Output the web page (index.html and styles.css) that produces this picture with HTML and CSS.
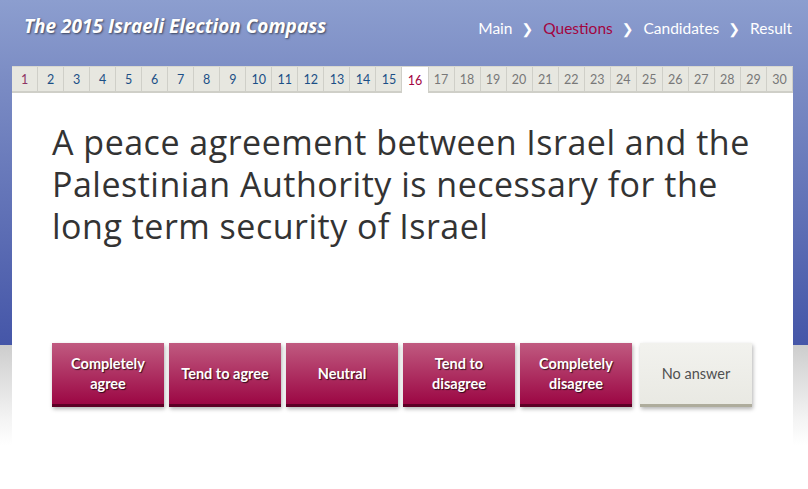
FILE: index.html
```html
<!DOCTYPE html>
<html>
<head>
<meta charset="utf-8">
<link rel="stylesheet" href="styles.css">
</head>
<body>
<header class="top">
  <div class="title">The 2015 Israeli Election Compass</div>
  <nav class="crumbs">
    <span class="crumb">Main</span><span class="sep">&#x276F;</span>
    <span class="crumb active">Questions</span><span class="sep">&#x276F;</span>
    <span class="crumb">Candidates</span><span class="sep">&#x276F;</span>
    <span class="crumb">Result</span>
  </nav>
</header>
<div class="wrap">
  <div class="tabs">
    <span class="tab visited">1</span>
    <span class="tab done">2</span>
    <span class="tab done">3</span>
    <span class="tab done">4</span>
    <span class="tab done">5</span>
    <span class="tab done">6</span>
    <span class="tab done">7</span>
    <span class="tab done">8</span>
    <span class="tab done">9</span>
    <span class="tab done">10</span>
    <span class="tab done">11</span>
    <span class="tab done">12</span>
    <span class="tab done">13</span>
    <span class="tab done">14</span>
    <span class="tab done">15</span>
    <span class="tab current">16</span>
    <span class="tab">17</span>
    <span class="tab">18</span>
    <span class="tab">19</span>
    <span class="tab">20</span>
    <span class="tab">21</span>
    <span class="tab">22</span>
    <span class="tab">23</span>
    <span class="tab">24</span>
    <span class="tab">25</span>
    <span class="tab">26</span>
    <span class="tab">27</span>
    <span class="tab">28</span>
    <span class="tab">29</span>
    <span class="tab">30</span>
  </div>
  <main class="panel">
    <h1 class="question">A peace agreement between Israel and the Palestinian Authority is necessary for the long term security of Israel</h1>
    <div class="answers">
      <button class="ans">Completely<br>agree</button>
      <button class="ans">Tend to agree</button>
      <button class="ans">Neutral</button>
      <button class="ans">Tend to<br>disagree</button>
      <button class="ans">Completely<br>disagree</button>
      <button class="ans none">No answer</button>
    </div>
  </main>
</div>
</body>
</html>
```
FILE: styles.css
```css
html {
  background: #fff;
}
body {
  margin: 0;
  height: 489px;
  overflow: hidden;
  font-family: Lato, "DejaVu Sans", sans-serif;
  background: linear-gradient(to bottom, #8c9ecf 0px, #7b8cc4 80px, #4556a8 345px, #cdcdcd 345px, #f4f4f4 420px, #ffffff 445px);
}
.top {
  height: 66px;
  display: flex;
  justify-content: space-between;
  align-items: flex-start;
  padding: 0 16px 0 24px;
  color: #fff;
}
.title {
  margin-top: 13px;
  font-family: "Open Sans", Lato, sans-serif;
  font-size: 19px;
  font-weight: bold;
  font-style: italic;
  text-shadow: 1px 1px 2px rgba(0, 0, 0, 0.55);
}
.crumbs {
  margin-top: 19px;
  font-size: 15.5px;
  display: flex;
  align-items: baseline;
}
.crumb {
  color: #fff;
}
.crumb.active {
  color: #a3053f;
}
.sep {
  font-family: "DejaVu Sans", sans-serif;
  font-weight: bold;
  font-size: 14px;
  margin: 0 10px 0 9px;
  color: #fff;
}
.wrap {
  margin-left: 12px;
  width: 781px;
}
.tabs {
  display: flex;
  height: 27px;
  background: #e7e7e0;
  border-top: 1px solid #d8d8d0;
  box-sizing: border-box;
  border-bottom: 2px solid #cfcfc8;
}
.tab {
  flex: 1;
  display: flex;
  align-items: center;
  justify-content: center;
  font-size: 12.5px;
  color: #787878;
  border-right: 1px solid #cfcfc8;
}
.tab.done {
  color: #1b4f86;
}
.tab.visited {
  color: #8e3464;
}
.tab.current {
  background: #fff;
  color: #a3053f;
  margin-bottom: -2px;
}
.panel {
  background: #fff;
  height: 396px;
  padding: 28px 40px 0;
  box-sizing: border-box;
}
.question {
  margin: 0;
  height: 222px;
  max-width: 701px;
  font-family: "Open Sans", Lato, sans-serif;
  font-size: 34px;
  letter-spacing: 0.5px;
  line-height: 42px;
  font-weight: normal;
  color: #333;
}
.answers {
  display: flex;
  gap: 5px;
}
.ans {
  width: 112px;
  height: 64px;
  box-sizing: border-box;
  border: 0;
  border-bottom: 3px solid #5c0025;
  padding: 0 4px;
  background: linear-gradient(to bottom, #c05a80, #9c0744);
  color: #fff;
  font-family: Lato, "DejaVu Sans", sans-serif;
  font-weight: bold;
  font-size: 14.5px;
  line-height: 20px;
  text-shadow: 1px 1px 1px rgba(0, 0, 0, 0.7);
  box-shadow: 1px 2px 4px rgba(0, 0, 0, 0.3);
}
.ans.none {
  margin-left: 3px;
  background: linear-gradient(to bottom, #f2f2ee, #e9e9e3);
  border-bottom: 3px solid #aeac9c;
  color: #505050;
  font-weight: normal;
  text-shadow: none;
}
```
